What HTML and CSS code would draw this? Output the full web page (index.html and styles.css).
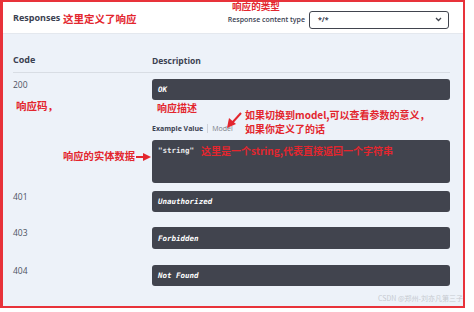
FILE: index.html
```html
<!DOCTYPE html>
<html lang="zh-CN">

<head>
    <meta charset="UTF-8">
    <meta name="viewport" content="width=device-width, initial-scale=1.0">
    <title>Responses</title>
    <link rel="stylesheet" href="styles.css">
</head>

<body>
    <div class="frame">
        <!-- Section header -->
        <div class="header">
            <span class="title">Responses</span>
            <div class="content-type">
                <span class="label">Response content type</span>
                <div class="select">
                    <span>*/*</span>
                    <svg class="chevron" width="7" height="5" viewBox="0 0 7 5">
                        <path d="M1 1 L3.5 3.5 L6 1" fill="none" stroke="#41444e" stroke-width="1.3" />
                    </svg>
                </div>
            </div>
        </div>

        <!-- Response table -->
        <div class="table">
            <div class="row head">
                <div class="code">Code</div>
                <div class="desc">Description</div>
            </div>

            <div class="row first">
                <div class="code">200</div>
                <div class="desc">
                    <div class="box">OK</div>
                    <div class="tabs">
                        <span class="tab active">Example Value</span>
                        <span class="tab">Model</span>
                    </div>
                    <div class="box sample">"string"</div>
                </div>
            </div>

            <div class="row r401">
                <div class="code">401</div>
                <div class="desc">
                    <div class="box">Unauthorized</div>
                </div>
            </div>

            <div class="row r403">
                <div class="code">403</div>
                <div class="desc">
                    <div class="box">Forbidden</div>
                </div>
            </div>

            <div class="row r404">
                <div class="code">404</div>
                <div class="desc">
                    <div class="box">Not Found</div>
                </div>
            </div>
        </div>
    </div>

    <!-- Red annotations drawn over the screenshot -->
    <div class="note n-resp">这里定义了响应</div>
    <div class="note n-type">响应的类型</div>
    <div class="note n-code">响应码，</div>
    <div class="note n-desc">响应描述</div>
    <div class="note n-model">如果切换到model,可以查看参数的意义，<br>如果你定义了的话</div>
    <div class="note n-body">响应的实体数据</div>
    <div class="note n-string">这里是一个string,代表直接返回一个字符串</div>

    <svg class="arrows" width="474" height="312" viewBox="0 0 474 312">
        <line x1="241" y1="113" x2="232" y2="123" stroke="#e3262e" stroke-width="2" />
        <polygon points="227,128 229,118 236,124" fill="#e3262e" />
        <line x1="136" y1="157" x2="145" y2="157" stroke="#e3262e" stroke-width="2" />
        <polygon points="151,157 143,153 143,161" fill="#e3262e" />
    </svg>

    <div class="watermark">CSDN @郑州-刘亦凡第三子</div>
</body>

</html>
```

FILE: styles.css
```css
body {
    margin: 0;
    background-color: #ffffff;
    font-family: "Open Sans", "Noto Sans", sans-serif;
    color: #3b4151;
}

.frame {
    width: 460px;
    border-left: 3px solid #e8323a;
    border-top: 2px solid #e8323a;
    border-right: 2px solid #e8323a;
    border-bottom: 2px solid #e8323a;
}

/* Header bar */
.header {
    height: 31px;
    padding: 0 14px 0 10px;
    display: flex;
    align-items: center;
    justify-content: space-between;
    background-color: #ffffff;
    border-bottom: 1px solid #e4e8ee;
}

.title {
    font-size: 9px;
    font-weight: 700;
}

.content-type {
    display: flex;
    align-items: center;
    gap: 4px;
    margin-top: 4px;
}

.label {
    font-size: 7px;
    font-weight: 600;
}

.select {
    width: 140px;
    height: 18px;
    box-sizing: border-box;
    padding: 0 6px 0 8px;
    border: 1.5px solid #41444e;
    border-radius: 3px;
    display: flex;
    align-items: center;
    justify-content: space-between;
    font-size: 7px;
    font-weight: 700;
}

/* Table */
.table {
    background-color: #edf2f9;
    padding: 20px 13px 20px 10px;
}

.row {
    display: flex;
}

.row.head {
    height: 12px;
    padding-bottom: 6px;
    border-bottom: 1px solid #d8dde4;
    align-items: center;
    font-size: 8.5px;
    font-weight: 700;
}

.code {
    width: 139px;
    flex-shrink: 0;
    font-size: 8.5px;
    line-height: 12px;
}

.row.head .code {
    font-size: 9px;
}

.row:not(.head) .code {
    color: #4d5363;
}

.desc {
    width: 298px;
}

.row.first { padding-top: 6px; }
.row.r401 { padding-top: 8px; }
.row.r403 { padding-top: 15px; }
.row.r404 { padding-top: 16px; }

.box {
    height: 21px;
    padding-left: 6px;
    display: flex;
    align-items: center;
    background-color: #41444e;
    border-radius: 3px;
    color: #ffffff;
    font-family: "DejaVu Sans Mono", monospace;
    font-size: 7.5px;
    font-weight: 700;
    font-style: italic;
}

.r403 .box {
    height: 22px;
}

.box.sample {
    height: 43px;
    align-items: flex-start;
    padding-top: 6px;
    box-sizing: border-box;
    font-style: normal;
    color: #e8e8ea;
}

.tabs {
    margin-top: 22px;
    height: 12px;
    display: flex;
    align-items: center;
    margin-bottom: 6px;
}

.tab {
    font-size: 7px;
    color: #7b7f88;
    padding: 0 4px;
}

.tab.active {
    font-weight: 700;
    color: #3b4151;
    padding-left: 0;
    border-right: 1px solid #cfd3da;
}

/* Annotations */
.note {
    position: absolute;
    color: #e3262e;
    font-family: "Noto Sans CJK SC", sans-serif;
    font-weight: 700;
    font-size: 10.5px;
    line-height: 14px;
    white-space: nowrap;
}

.n-resp { left: 63px; top: 12px; }
.n-type { left: 232px; top: -1px; font-size: 9.6px; }
.n-code { left: 16px; top: 99px; }
.n-desc { left: 157px; top: 101px; font-size: 10px; }
.n-model { left: 245px; top: 108px; font-size: 10px; }
.n-body { left: 63px; top: 149px; font-size: 10.3px; }
.n-string { left: 201px; top: 144px; font-size: 10px; }

.arrows {
    position: absolute;
    left: 0;
    top: 0;
    pointer-events: none;
}

.watermark {
    position: absolute;
    left: 378px;
    top: 293px;
    font-family: "Noto Sans CJK SC", sans-serif;
    font-size: 7px;
    color: #c6cad0;
    white-space: nowrap;
}
```
